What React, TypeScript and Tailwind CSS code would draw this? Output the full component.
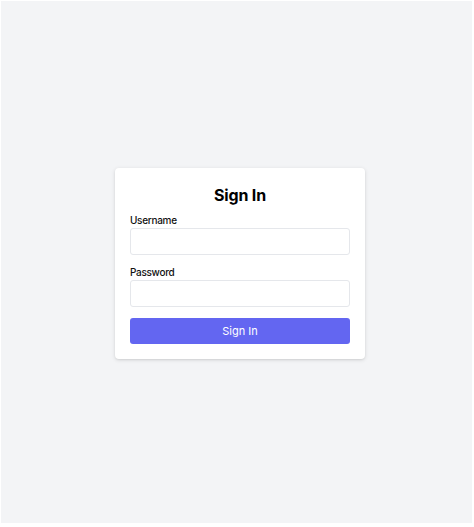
import { useState } from "react"

/** 登录页 */
const App = () => {
  const [username, setUsername] = useState("")
  const [password, setPassword] = useState("")

  return (
    <div className="h-[527px] w-[474px] bg-white pl-px pt-px pr-[2px] pb-[4px]">
      <div
        className="flex h-full w-full items-center justify-center bg-[#f3f4f6] pl-[7px] pt-[3px]"
        style={{ fontFamily: "Inter, 'Liberation Sans', sans-serif" }}
      >
        <form
          className="w-[250px] rounded-[4px] bg-white px-[15px] pt-[15px] pb-[15.5px] shadow-[0_1px_4px_rgba(0,0,0,0.12),0_1px_2px_rgba(0,0,0,0.06)]"
          onSubmit={(e) => e.preventDefault()}
        >
          <h1 className="text-center text-[16px] font-bold leading-[24px] tracking-[-0.01em] text-black">
            Sign In
          </h1>

          {/* 用户名 */}
          <label className="mt-[6px] block text-[10px] font-medium leading-[15px] tracking-[-0.03em] text-[#111]">
            Username
          </label>
          <input
            type="text"
            value={username}
            onChange={(e) => setUsername(e.target.value)}
            className="block h-[27px] w-full rounded-[3px] border border-[#e5e7eb] bg-white px-2 text-[11px] outline-none"
          />

          {/* 密码 */}
          <label className="mt-[9.5px] block text-[10px] font-medium leading-[15px] tracking-[-0.03em] text-[#111]">
            Password
          </label>
          <input
            type="password"
            value={password}
            onChange={(e) => setPassword(e.target.value)}
            className="block h-[27px] w-full rounded-[3px] border border-[#e5e7eb] bg-white px-2 text-[11px] outline-none"
          />

          <button
            type="submit"
            className="mt-[11px] block h-[26px] w-full rounded-[3px] bg-[#6366f1] text-[11px] leading-[26px] text-white"
          >
            Sign In
          </button>
        </form>
      </div>
    </div>
  )
}

export default App
